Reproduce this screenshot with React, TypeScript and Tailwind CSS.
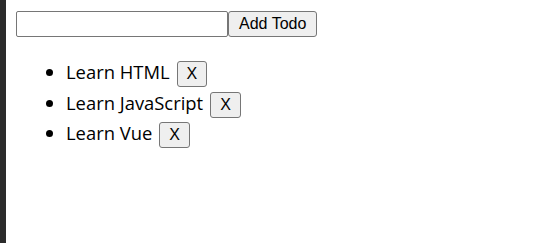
import React, { useState } from 'react';

type Todo = { id: number; text: string };

const initialTodos: Todo[] = [
  { id: 1, text: 'Learn HTML' },
  { id: 2, text: 'Learn JavaScript' },
  { id: 3, text: 'Learn Vue' },
];

export default function App() {
  const [todos, setTodos] = useState<Todo[]>(initialTodos);
  const [draft, setDraft] = useState('');

  const addTodo = () => {
    if (!draft.trim()) return;
    setTodos([...todos, { id: Date.now(), text: draft.trim() }]);
    setDraft('');
  };

  return (
    <div className="flex w-[538px] h-[243px] bg-white overflow-hidden">
      <div className="w-[6px] shrink-0 bg-[#2b2b2b]" />
      <div className="flex-1 pl-[10px] pt-[11px]">
        <div className="flex items-start">
          <input
            value={draft}
            onChange={(e) => setDraft(e.target.value)}
            className="w-[212px] h-[26px] border border-[#767676] rounded-[2px] px-1 text-[16px] outline-none"
            style={{ fontFamily: '"Liberation Sans", Arial, sans-serif' }}
          />
          <button
            onClick={addTodo}
            className="h-[26px] px-[10px] bg-[#efefef] border border-[#767676] rounded-[3px] text-[16px] leading-none text-black"
            style={{ fontFamily: '"Liberation Sans", Arial, sans-serif' }}
          >
            Add Todo
          </button>
        </div>

        <ul
          className="list-disc pl-[50px] mt-[20px] text-[18.4px] leading-[30.7px] text-black"
          style={{ fontFamily: '"Open Sans", "Noto Sans", sans-serif' }}
        >
          {todos.map((todo) => (
            <li key={todo.id}>
              {todo.text}
              <button
                onClick={() => setTodos(todos.filter((t) => t.id !== todo.id))}
                className="inline-block align-middle ml-[7px] h-[26px] px-[9px] bg-[#efefef] border border-[#767676] rounded-[3px] text-[16px] leading-none"
                style={{ fontFamily: '"Liberation Sans", Arial, sans-serif' }}
              >
                X
              </button>
            </li>
          ))}
        </ul>
      </div>
    </div>
  );
}
